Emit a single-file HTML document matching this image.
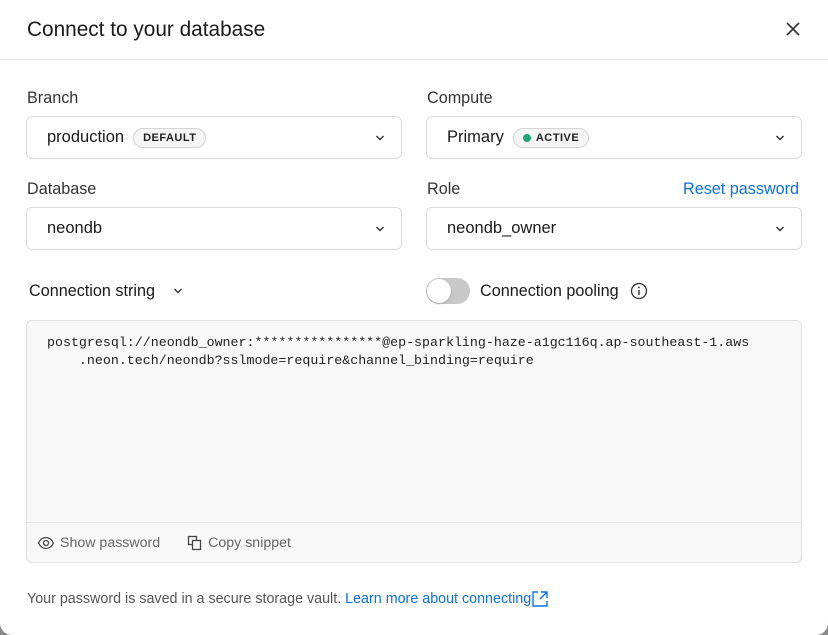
<!DOCTYPE html>
<html><head><style>
*{box-sizing:border-box;margin:0;padding:0}
body{width:828px;height:635px;background:#8a8a8a;font-family:"Liberation Sans",sans-serif;color:#1a1a1a;overflow:hidden}
.m{position:absolute;left:0;top:0;width:828px;height:635px;background:#fff;border-radius:0 0 12px 12px}
.hd{height:60px;border-bottom:1px solid #e2e2e2;position:relative}
.hd h1{position:absolute;left:27px;top:18px;font-size:20.8px;font-weight:400;color:#1a1a1a}
.lbl{position:absolute;font-size:16.2px;color:#333}
.sel{position:absolute;height:43px;border:1px solid #dcdcdc;border-radius:6px;font-size:16.5px;padding:0 20px;display:flex;align-items:center}
.chev{position:absolute;right:14px;top:14px}
.badge{margin-left:9px;border:1px solid #d4d4d4;background:#f5f5f5;border-radius:12px;font-size:11px;font-weight:700;letter-spacing:.5px;padding:3px 9px;color:#222;display:flex;align-items:center}
.dot{width:8px;height:8px;border-radius:50%;background:#1aa772;margin-right:5px}
.box{position:absolute;left:26px;top:320px;width:776px;height:243px;background:#f8f8f8;border:1px solid #e0e0e0;border-radius:6px}
.code{position:absolute;left:20px;top:13px;font-family:"Liberation Mono",monospace;font-size:13.3px;line-height:18px;color:#222;white-space:pre}
.ft{position:absolute;left:0;right:0;bottom:0;height:40px;border-top:1px solid #e2e2e2;display:flex;align-items:center;font-size:14.2px;color:#666}
</style></head><body><div class="m">
<div class="hd"><h1>Connect to your database</h1>
<svg style="position:absolute;left:786px;top:22px" width="14" height="14" viewBox="0 0 14 14"><path d="M1 1L13 13M13 1L1 13" stroke="#333" stroke-width="1.6"/></svg></div>
<div class="lbl" style="left:27px;top:89px">Branch</div>
<div class="lbl" style="left:427px;top:89px">Compute</div>
<div class="sel" style="left:26px;top:116px;width:376px">production<span class="badge">DEFAULT</span><svg class="chev" width="14" height="14" viewBox="0 0 14 14"><path d="M3.5 5L7 8.5L10.5 5" fill="none" stroke="#333" stroke-width="1.5"/></svg></div>
<div class="sel" style="left:426px;top:116px;width:376px">Primary<span class="badge"><span class="dot"></span>ACTIVE</span><svg class="chev" width="14" height="14" viewBox="0 0 14 14"><path d="M3.5 5L7 8.5L10.5 5" fill="none" stroke="#333" stroke-width="1.5"/></svg></div>
<div class="lbl" style="left:27px;top:180px">Database</div>
<div class="lbl" style="left:427px;top:180px">Role</div>
<div class="lbl" style="left:683px;top:180px;color:#0b72e7">Reset password</div>
<div class="sel" style="left:26px;top:207px;width:376px">neondb<svg class="chev" width="14" height="14" viewBox="0 0 14 14"><path d="M3.5 5L7 8.5L10.5 5" fill="none" stroke="#333" stroke-width="1.5"/></svg></div>
<div class="sel" style="left:426px;top:207px;width:376px">neondb_owner<svg class="chev" width="14" height="14" viewBox="0 0 14 14"><path d="M3.5 5L7 8.5L10.5 5" fill="none" stroke="#333" stroke-width="1.5"/></svg></div>
<div class="lbl" style="left:29px;top:282px;color:#1a1a1a">Connection string</div>
<svg style="position:absolute;left:171px;top:284px" width="14" height="14" viewBox="0 0 14 14"><path d="M3.5 5L7 8.5L10.5 5" fill="none" stroke="#333" stroke-width="1.4"/></svg>
<div style="position:absolute;left:426px;top:278px;width:44px;height:26px;border-radius:13px;background:#c8c8c8"><div style="position:absolute;left:1px;top:1px;width:24px;height:24px;border-radius:50%;background:#fff;box-shadow:0 1px 2px rgba(0,0,0,.2)"></div></div>
<div class="lbl" style="left:480px;top:282px;color:#1a1a1a">Connection pooling</div>
<svg style="position:absolute;left:630px;top:282px" width="18" height="18" viewBox="0 0 18 18"><circle cx="9" cy="9" r="7.5" fill="none" stroke="#333" stroke-width="1.3"/><path d="M9 8v5" stroke="#333" stroke-width="1.4"/><circle cx="9" cy="5.5" r="0.9" fill="#333"/></svg>
<div class="box"><div class="code">postgresql://neondb_owner:****************@ep-sparkling-haze-a1gc116q.ap-southeast-1.aws
    .neon.tech/neondb?sslmode=require&amp;channel_binding=require</div>
<div class="ft">
<svg style="margin-left:10px;margin-right:5px" width="18" height="18" viewBox="0 0 18 18"><path d="M1.5 9C3.5 5 6 3.5 9 3.5S14.5 5 16.5 9C14.5 13 12 14.5 9 14.5S3.5 13 1.5 9Z" fill="none" stroke="#444" stroke-width="1.3"/><circle cx="9" cy="9" r="2.5" fill="none" stroke="#444" stroke-width="1.3"/></svg>Show password
<svg style="margin-left:27px;margin-right:5px" width="16" height="16" viewBox="0 0 16 16"><rect x="1.5" y="1.5" width="8" height="8" fill="none" stroke="#444" stroke-width="1.3"/><rect x="5.5" y="5.5" width="8" height="9" fill="#f8f8f8" stroke="#444" stroke-width="1.3"/></svg>Copy snippet</div></div>
<div style="position:absolute;left:27px;top:591px;font-size:14.3px;color:#555">Your password is saved in a secure storage vault. <span style="color:#0b72e7">Learn more about connecting</span></div>
<svg style="position:absolute;left:531px;top:590px" width="18" height="18" viewBox="0 0 18 18"><path d="M7 2H2V16H16V11M10 2H16V8M16 2L9 9" fill="none" stroke="#0b72e7" stroke-width="1.4"/></svg>
</div></body></html>
